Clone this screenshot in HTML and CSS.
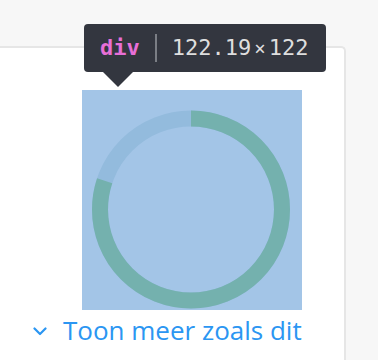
FILE: index.html
```html
<!DOCTYPE html>
<html>
<head>
<meta charset="utf-8">
<link rel="stylesheet" href="styles.css">
</head>
<body>
<div class="card">
  <div class="chart">
    <svg class="ring" width="220" height="220" viewBox="0 0 220 220">
      <circle cx="109" cy="119.5" r="91" fill="none" stroke="#93bbdd" stroke-width="16"/>
      <circle cx="109" cy="119.5" r="91" fill="none" stroke="#74b1ae" stroke-width="16" stroke-dasharray="457.4 600" transform="rotate(-90 109 119.5)"/>
    </svg>
  </div>
  <a class="more" href="#">
    <svg class="chev" width="14" height="9" viewBox="0 0 14 9"><path d="M1.5 1.5 L7 7 L12.5 1.5" fill="none" stroke="#2b96f2" stroke-width="2.2" stroke-linecap="round" stroke-linejoin="round"/></svg>
    <span>Toon meer zoals dit</span>
  </a>
</div>
<div class="tip">
  <span class="tag">div</span>
  <span class="sep"></span>
  <span class="dim">122.19<span class="x">×</span>122</span>
</div>
</body>
</html>
```

FILE: styles.css
```css
html, body {
  margin: 0;
  padding: 0;
}
body {
  background: #f7f7f7;
  width: 378px;
  height: 360px;
  overflow: hidden;
  position: relative;
}
.card {
  margin-top: 46px;
  margin-left: -2px;
  width: 348px;
  height: 314px;
  background: #ffffff;
  border: 2px solid #e6e6e6;
  border-bottom: none;
  border-radius: 0 5px 0 0;
  padding-top: 42px;
  box-sizing: border-box;
}
.chart {
  margin-left: 82px;
  width: 220px;
  height: 220px;
  background: #a3c5e7;
}
.ring {
  display: block;
}
.more {
  display: flex;
  align-items: center;
  margin-top: 5px;
  padding-left: 33px;
  text-decoration: none;
  color: #2b96f2;
  font-family: "Open Sans", sans-serif;
  font-size: 26px;
  line-height: 30px;
  gap: 16px;
}
.chev {
  display: block;
  margin-top: 2px;
}
.tip {
  position: absolute;
  left: 84px;
  top: 24px;
  width: 242px;
  height: 48px;
  box-sizing: border-box;
  background: #33363f;
  border-radius: 4px;
  display: flex;
  align-items: center;
  padding-left: 16px;
  font-family: "DejaVu Sans Mono", monospace;
  font-size: 22px;
  line-height: 28px;
}
.tip::after {
  content: "";
  position: absolute;
  left: 19px;
  top: 48px;
  width: 0;
  height: 0;
  border-left: 15px solid transparent;
  border-right: 15px solid transparent;
  border-top: 15px solid #33363f;
}
.tag {
  color: #e86fd7;
  font-weight: bold;
}
.sep {
  width: 2px;
  height: 28px;
  background: #7b7e85;
  margin: 0 15px 0 15px;
}
.dim {
  color: #dedede;
}
.x {
  margin: 0 3px;
  font-size: 19px;
}
```
